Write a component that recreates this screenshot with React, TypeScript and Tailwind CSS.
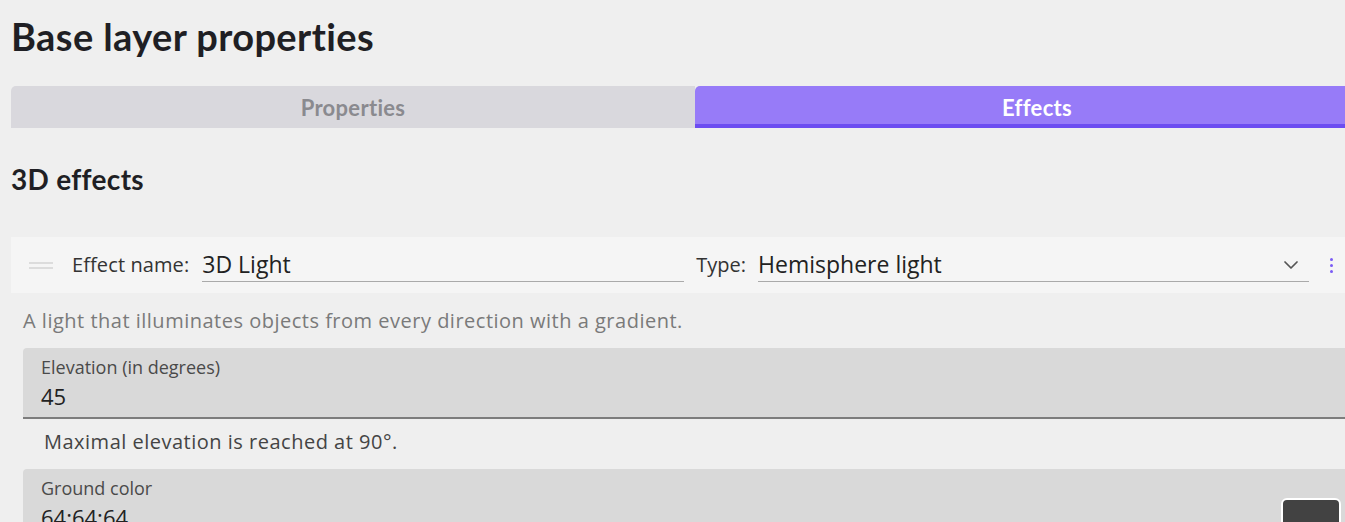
import { ChevronDown } from "lucide-react";

const Tabs = () => {
  return (
    <div className="flex h-[42px] mt-[27px] font-['Lato',sans-serif]">
      <button className="shrink-0 w-[684px] h-full bg-[#d9d8dd] rounded-tl-[5px] text-[22px] tracking-[0.3px] font-bold text-[#8a8a8f]">
        Properties
      </button>
      <button className="shrink-0 w-[684px] h-full bg-[#977bf8] rounded-tl-[5px] border-b-4 border-[#6c4cf1] pt-[4px] text-[22px] tracking-[0.3px] font-bold text-white">
        Effects
      </button>
    </div>
  );
};

const EffectRow = () => {
  return (
    <div className="flex items-center h-[56px] bg-[#f5f5f5] mt-[41px]">
      <div className="shrink-0 ml-[18px] w-[24px] flex flex-col gap-[3px]">
        <div className="h-[2px] bg-[#dcdcdc]" />
        <div className="h-[2px] bg-[#dcdcdc]" />
      </div>
      <span className="shrink-0 ml-[19px] text-[20px] tracking-[0.1px] text-[#333]">Effect name:</span>
      <div className="shrink-0 ml-[13px] w-[482px] border-b border-[#aaa] h-[34px] flex items-center">
        <span className="text-[23px] text-[#222]">3D Light</span>
      </div>
      <span className="shrink-0 ml-[12px] text-[20px] text-[#333]">Type:</span>
      <div className="shrink-0 ml-[12px] w-[551px] border-b border-[#aaa] h-[34px] flex items-center justify-between">
        <span className="text-[23px] text-[#222]">Hemisphere light</span>
        <ChevronDown className="w-6 h-6 text-[#555] mr-[6px]" strokeWidth={1.75} />
      </div>
      <div className="shrink-0 ml-[21px] flex flex-col gap-[3px]">
        <div className="w-[3px] h-[3px] rounded-full bg-[#7b5cf5]" />
        <div className="w-[3px] h-[3px] rounded-full bg-[#7b5cf5]" />
        <div className="w-[3px] h-[3px] rounded-full bg-[#7b5cf5]" />
      </div>
    </div>
  );
};

const Field = ({ label, value, children }: { label: string; value: string; children?: React.ReactNode }) => {
  return (
    <div className="relative h-[71px] bg-[#d9d9d9] rounded-t-[4px] border-b-2 border-[#7d7d7d] pl-[18px] pt-[7px]">
      <div className="text-[18px] leading-[24px] text-[#4a4a4a]">{label}</div>
      <div className="text-[22px] leading-[34px] text-[#222]">{value}</div>
      {children}
    </div>
  );
};

export default function App() {
  return (
    <div className="min-h-screen bg-[#efefef] overflow-hidden font-['Open_Sans',sans-serif]">
      <div className="w-[1390px] px-[11px] pt-[13px]">
        <h1 className="font-['Lato',sans-serif] text-[38px] leading-[46px] tracking-[0.4px] font-bold text-[#1f1f24]">
          Base layer properties
        </h1>
        <Tabs />
        <h2 className="mt-[34px] font-['Lato',sans-serif] text-[28px] leading-[34px] tracking-[0.3px] font-bold text-[#1f1f24]">
          3D effects
        </h2>
        <EffectRow />
        <div className="pl-[12px]">
          <p className="mt-[16px] text-[20px] leading-[24px] tracking-[0.5px] text-[#7a7a7a]">
            A light that illuminates objects from every direction with a gradient.
          </p>
          <div className="mt-[15px]">
            <Field label="Elevation (in degrees)" value="45" />
          </div>
          <p className="mt-[11px] pl-[21px] text-[20px] leading-[24px] tracking-[0.5px] text-[#444]">
            Maximal elevation is reached at 90°.
          </p>
          <div className="mt-[15px]">
            <Field label="Ground color" value="64:64:64">
              <div className="absolute left-[1258px] top-[29px] w-[60px] h-[40px] rounded-[6px] border-2 border-white bg-[#424242]" />
            </Field>
          </div>
        </div>
      </div>
    </div>
  );
}
